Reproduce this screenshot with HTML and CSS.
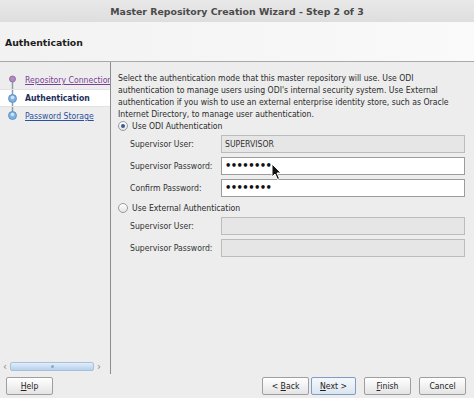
FILE: index.html
```html
<!DOCTYPE html>
<html lang="en">
<head>
  <meta charset="UTF-8" />
  <title>Master Repository Creation Wizard - Step 2 of 3</title>
  <link rel="stylesheet" href="styles.css">
</head>
<body>
  <div class="window">
    <div class="titlebar">Master Repository Creation Wizard - Step 2 of 3</div>
    <div class="header">Authentication</div>

    <div class="body">
      <nav class="steps">
        <div class="step visited">
          <svg class="step-icon" width="17" height="18" viewBox="0 0 17 18">
            <line x1="8.5" y1="9" x2="8.5" y2="18" stroke="#8c9bb0" stroke-width="1.5"/>
            <circle cx="8.5" cy="8" r="3" fill="#b08ac0" stroke="#8a5f9e" stroke-width="0.8"/>
          </svg>
          <a>Repository Connection</a>
        </div>
        <div class="step current">
          <svg class="step-icon" width="17" height="18" viewBox="0 0 17 18">
            <line x1="8.5" y1="0" x2="8.5" y2="18" stroke="#8c9bb0" stroke-width="1.5"/>
            <circle cx="8.5" cy="9.5" r="4" fill="#7fb2e0" stroke="#4f86c0" stroke-width="0.8"/>
            <circle cx="8.5" cy="8.5" r="1.8" fill="#cfe4f7"/>
          </svg>
          <span>Authentication</span>
        </div>
        <div class="step">
          <svg class="step-icon" width="17" height="18" viewBox="0 0 17 18">
            <line x1="8.5" y1="0" x2="8.5" y2="8" stroke="#8c9bb0" stroke-width="1.5"/>
            <circle cx="8.5" cy="8.5" r="4" fill="#7fb2e0" stroke="#4f86c0" stroke-width="0.8"/>
            <circle cx="8.5" cy="7.5" r="1.8" fill="#cfe4f7"/>
          </svg>
          <a>Password Storage</a>
        </div>

        <div class="hscroll">
          <span class="arrow">&lsaquo;</span>
          <span class="thumb"><span class="grip"></span></span>
          <span class="arrow">&rsaquo;</span>
        </div>
      </nav>

      <main class="content">
        <p class="intro">Select the authentication mode that this master repository will use. Use ODI authentication to manage users using ODI's internal security system. Use External authentication if you wish to use an external enterprise identity store, such as Oracle Internet Directory, to manage user authentication.</p>

        <label class="radio"><span class="dot checked"></span>Use ODI Authentication</label>
        <div class="fields">
          <span class="label">Supervisor User:</span>
          <div class="field disabled">SUPERVISOR</div>
          <span class="label">Supervisor Password:</span>
          <div class="field"><span class="pw">&bull;&bull;&bull;&bull;&bull;&bull;&bull;&bull;</span></div>
          <span class="label">Confirm Password:</span>
          <div class="field"><span class="pw">&bull;&bull;&bull;&bull;&bull;&bull;&bull;&bull;</span></div>
        </div>

        <label class="radio second"><span class="dot"></span>Use External Authentication</label>
        <div class="fields">
          <span class="label">Supervisor User:</span>
          <div class="field disabled"></div>
          <span class="label">Supervisor Password:</span>
          <div class="field disabled"></div>
        </div>

        <svg class="cursor" width="12" height="18" viewBox="0 0 12 18">
          <path d="M1 1 L1 14 L4 11 L6.5 16.5 L8.5 15.5 L6 10 L10 10 Z" fill="#111" stroke="#fff" stroke-width="1"/>
        </svg>
      </main>
    </div>

    <div class="footer">
      <button class="btn"><u>H</u>elp</button>
      <div class="spacer"></div>
      <button class="btn">&lt; <u>B</u>ack</button>
      <button class="btn default"><u>N</u>ext &gt;</button>
      <button class="btn gap"><u>F</u>inish</button>
      <button class="btn gap">Cancel</button>
    </div>
  </div>
</body>
</html>
```

FILE: styles.css
```css
* { box-sizing: border-box; }
body { margin: 0; background: #ededed; font-family: "DejaVu Sans Condensed", "DejaVu Sans", sans-serif; font-size: 8.6px; color: #2b2b2b; }
.window { width: 474px; height: 398px; display: flex; flex-direction: column; overflow: hidden; }

.titlebar { height: 22px; line-height: 23px; text-align: center; font-family: "DejaVu Sans", sans-serif; font-weight: bold; font-size: 9.4px; color: #4a4a4a; background: linear-gradient(#e9e9e9, #dedede); }
.header { height: 40px; padding: 0 5px; line-height: 42px; font-family: "DejaVu Sans", sans-serif; font-weight: bold; font-size: 9.3px; color: #1c1c1c; background: linear-gradient(90deg, #f2f2f2, #fafafa); border-bottom: 1px solid #a9a9a9; }

.body { flex: 1; display: flex; min-height: 0; }
.steps { width: 111px; flex: none; display: flex; flex-direction: column; padding-top: 9px; border-right: 1px solid #8c8c8c; background: #ededed; }
.step { height: 18px; display: flex; align-items: center; white-space: nowrap; overflow: hidden; }
.step-icon { flex: none; margin: 0 4px 0 4px; }
.step a { color: #2c4f9e; text-decoration: underline; }
.step.visited a { color: #7a3f96; }
.step.current { background: #fff; border-top: 1px solid #e2e2e2; border-bottom: 1px solid #e2e2e2; }
.step.current span { font-weight: bold; color: #1b2d57; }

.hscroll { margin-top: auto; margin-bottom: 2px; margin-left: 2px; height: 11px; display: flex; align-items: center; gap: 2px; color: #888; font-size: 11px; }
.arrow { width: 6px; text-align: center; line-height: 10px; }
.thumb { width: 84px; height: 9px; border: 1px solid #a9c0da; border-radius: 2px; background: linear-gradient(#e2eefa, #b6d0ec); display: flex; justify-content: center; align-items: center; }
.grip { width: 3px; height: 3px; border-radius: 50%; background: #8aa9cf; }

.content { flex: 1; padding: 10px 9px 0 7px; position: relative; }
.intro { margin: 0; line-height: 12px; color: #2b2b2b; }
.radio { display: flex; align-items: center; height: 12px; }
.radio.second { margin-top: 5px; }
.dot { width: 10px; height: 10px; border: 1px solid #9a9a9a; border-radius: 50%; background: linear-gradient(#fff, #e4e4e4); margin-right: 4px; display: flex; align-items: center; justify-content: center; }
.dot.checked::after { content: ""; width: 4px; height: 4px; border-radius: 50%; background: #3c5c92; }

.fields { display: grid; grid-template-columns: 91px 1fr; row-gap: 4px; align-items: center; margin: 3px 0 0 12px; }
.label { color: #333; white-space: nowrap; }
.field { height: 18px; border: 1px solid #9c9c9c; background: #fff; padding: 0 3px; line-height: 16px; color: #333; }
.field.disabled { background: #e6e6e6; border-color: #bcbcbc; }
.pw { font-family: "DejaVu Sans", sans-serif; font-weight: bold; font-size: 10px; letter-spacing: -0.6px; color: #111; }

.cursor { position: absolute; left: 160px; top: 101px; }

.footer { height: 24px; flex: none; display: flex; align-items: flex-start; padding: 3px 8px 0 6px; }
.spacer { flex: 1; }
.btn { height: 18px; width: 47px; padding: 0; margin-left: 2px; font-family: inherit; font-size: 8.6px; color: #222; border: 1px solid #9e9e9e; border-radius: 2px; background: linear-gradient(#ffffff, #e4e4e4); }
.footer .btn:first-child { margin-left: 0; }
.btn.default { width: 45px; border-color: #7f9cc5; background: linear-gradient(#f4f8fc, #dbe5f0); }
.btn.gap { margin-left: 8px; }
```
